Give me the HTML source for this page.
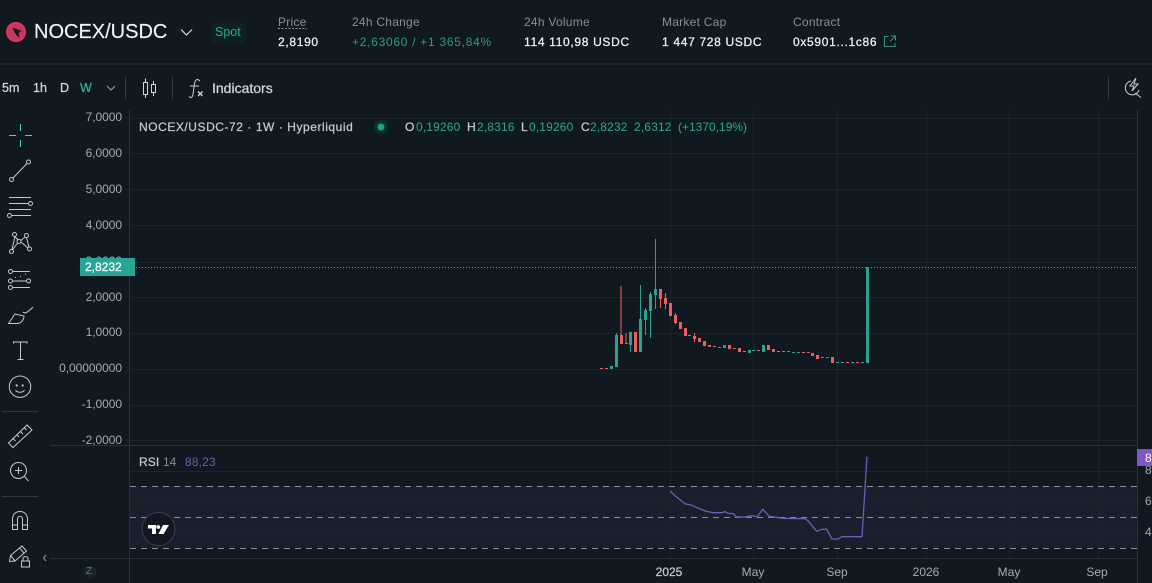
<!DOCTYPE html>
<html><head><meta charset="utf-8"><style>
html,body{margin:0;padding:0;background:#10191f;}
#p{position:relative;width:1152px;height:583px;overflow:hidden;background:#10191f;font-family:"Liberation Sans",sans-serif;filter:blur(.3px);}
.t{position:absolute;white-space:nowrap;line-height:16px;}
.l{font-size:12px;color:#878f93;letter-spacing:.25px;top:14px;}
.v{font-size:12px;color:#f2f4f4;letter-spacing:.68px;top:34px;-webkit-text-stroke:.25px #f2f4f4;}
.y{font-size:12px;color:#a4abaf;right:1030px;letter-spacing:-.05px;}
.b{font-size:12px;color:#c3cacd;top:119px;letter-spacing:.1px;-webkit-text-stroke:.25px #c3cacd;}
.g{font-size:12px;color:#2ba88f;top:119px;letter-spacing:.15px;}
.m{font-size:12.5px;color:#d4d8da;top:80px;-webkit-text-stroke:.25px #d4d8da;}
.x{font-size:12px;color:#a6adb1;top:564px;transform:translateX(-50%);}
svg{position:absolute;left:0;top:0;}
</style></head><body><div id="p">

<svg width="1152" height="583" viewBox="0 0 1152 583" fill="none">
<rect x="0" y="63" width="1152" height="2" fill="#17222a"/>
<rect x="130" y="486" width="1007" height="62" fill="#1a1f2e"/>
<g stroke="#1a252b" stroke-width="1">
<path d="M130 118.500H1137M130 153.500H1137M130 189.500H1137M130 225.500H1137M130 262.500H1137M130 297.500H1137M130 333.500H1137M130 369.500H1137M130 405.500H1137M130 440.500H1137"/>
<path d="M130 471.500H1137M130 502.500H1137M130 533.500H1137"/>
<path d="M670.500 110V558M753.500 110V558M837.500 110V558M926.500 110V558M1009.500 110V558M1098.500 110V558"/>
</g>
<g stroke="#273238" stroke-width="1">
<path d="M129.500 110V583M1137.500 110V583"/>
<path d="M50 445.500H1137M50 558.500H1137"/>
</g>
<g stroke="#8a8e96" stroke-width="1" stroke-dasharray="6 5">
<path d="M130 486.500H1137M130 517.500H1137M130 548.500H1137"/>
</g>
<path d="M130 267.500H1137" stroke="#2ab5a0" stroke-width="1" stroke-dasharray="1 2"/>
<g fill="#ef5e5e">
<rect x="600" y="368" width="3" height="1"/><rect x="605" y="368" width="3" height="1"/>
<rect x="620.500" y="286" width="1" height="58"/><rect x="620" y="335" width="3" height="9"/>
<rect x="625.500" y="333" width="1" height="11"/><rect x="625" y="343" width="3" height="1"/>
<rect x="634" y="332" width="3" height="20"/>
<rect x="659" y="289" width="3" height="10"/><rect x="660" y="299" width="1" height="9"/>
<rect x="665" y="293" width="1" height="16"/><rect x="664" y="298" width="3" height="6"/>
<rect x="669" y="303" width="3" height="13"/>
<rect x="675" y="313" width="1" height="11"/><rect x="674" y="315" width="3" height="8"/>
<rect x="679" y="322" width="3" height="7"/>
<rect x="684" y="328" width="3" height="8"/>
<rect x="688" y="335" width="3" height="1"/>
<rect x="694" y="333" width="1" height="9"/><rect x="693" y="336" width="3" height="3"/>
<rect x="698" y="338" width="3" height="4"/>
<rect x="703" y="341" width="3" height="5"/>
<rect x="708" y="345" width="3" height="2"/>
<rect x="713" y="346" width="3" height="1"/><rect x="718" y="347" width="3" height="1"/>
<rect x="728" y="345" width="3" height="4"/>
<rect x="733" y="348" width="3" height="1"/>
<rect x="738" y="348" width="3" height="4"/>
<rect x="743" y="351" width="3" height="1"/>
<rect x="757" y="350" width="3" height="1"/>
<rect x="767" y="345" width="3" height="5"/>
<rect x="772" y="349" width="3" height="3"/>
<rect x="777" y="351" width="3" height="1"/><rect x="782" y="351" width="3" height="1"/>
<rect x="802" y="352" width="3" height="1"/><rect x="807" y="352" width="3" height="1"/>
<rect x="811" y="353" width="3" height="3"/>
<rect x="816" y="355" width="3" height="4"/>
<rect x="831" y="357" width="3" height="6"/>
<rect x="846" y="362" width="3" height="1"/><rect x="856" y="362" width="3" height="1"/>
</g>
<g fill="#26a392">
<rect x="610" y="366" width="3" height="3"/>
<rect x="616" y="333" width="1" height="4"/><rect x="615" y="335" width="3" height="32"/>
<rect x="629" y="332" width="3" height="13"/><rect x="630" y="345" width="1" height="7"/>
<rect x="640" y="285" width="1" height="35"/><rect x="639" y="319" width="3" height="33"/>
<rect x="645" y="308" width="1" height="27"/><rect x="644" y="310" width="3" height="10"/>
<rect x="650" y="292" width="1" height="46"/><rect x="649" y="294" width="3" height="17"/>
<rect x="655" y="239" width="1" height="70"/><rect x="654" y="289" width="3" height="6"/>
<rect x="723" y="345" width="3" height="3"/>
<rect x="748" y="350" width="3" height="3"/>
<rect x="752" y="350" width="3" height="1"/>
<rect x="762" y="345" width="3" height="7"/>
<rect x="787" y="351" width="3" height="1"/>
<rect x="792" y="352" width="3" height="1"/><rect x="797" y="352" width="3" height="1"/>
<rect x="821" y="357" width="3" height="1"/><rect x="826" y="357" width="3" height="1"/>
<rect x="836" y="362" width="3" height="1"/><rect x="841" y="362" width="3" height="1"/>
<rect x="851" y="362" width="3" height="1"/><rect x="861" y="362" width="3" height="1"/>
<rect x="866" y="267" width="3" height="96"/>
</g>
<path d="M670 491L675 495.700L685 503.700L691.700 505.300L705 511L713.300 512.700L721.700 512.700L725 511.700L728.300 513.300L733.300 513.700L736.700 517L745 517L751.700 515.700L757.300 516.700L762.700 509.300L769.300 516.300L783.300 518.300L805 518.700L808.300 521L816.700 531.300L821.700 529.300L826.700 529.300L832 539L838.300 539L841.700 536.700L862 536.700L867 456.700" stroke="#6f5cb4" stroke-width="1.300" stroke-linejoin="round"/>

<!-- logo -->
<circle cx="16" cy="32" r="9" fill="#b93a68" stroke="#ea3060" stroke-width="2"/>
<path d="M10 26L22 38" stroke="#ea3060" stroke-width="1.400"/>
<path d="M12.500 27.500L21.500 31L18.500 33L20 37.500L16.500 35.500L15 33Z" fill="#2a1018"/>
<path d="M181 29.500L186.500 35L192 29.500" stroke="#d8dcde" stroke-width="1.200"/>
<rect x="212" y="23" width="34" height="20" rx="3" fill="#0f2125"/>
<path d="M278 28.500H307" stroke="#878f93" stroke-dasharray="2 1.500"/>
<path d="M888.500 36.500H884.500V46.500H895V43M891 36H895.500V40.500M895.500 36L890 41.500" stroke="#3f8f7d" stroke-width="1"/>
<path d="M125.500 77V99M172.500 77V99M1108.500 77V99" stroke="#333e44"/>
<path d="M107 86L111 90L115 86" stroke="#9aa2a6" stroke-width="1"/>
<g stroke="#d0d5d7" stroke-width="1"><rect x="143.500" y="82.500" width="4" height="12"/><path d="M145.500 78.500V82.500M145.500 94.500V98"/><rect x="151.500" y="84.500" width="4" height="8"/><path d="M153.500 81V84.500M153.500 92.500V96"/></g>
<path d="M200 81C197 78 195 80 194.500 84L193 94C192.500 97.500 191 98.500 189 96.500M190 86H199" stroke="#c7ccce" stroke-width="1"/>
<path d="M198 91.500L202.500 96M202.500 91.500L198 96" stroke="#d5dadc" stroke-width="1.300"/>
<g stroke="#c7ccce" stroke-width="1"><path d="M1131 81A7 7 0 1 0 1139 90"/><path d="M1135 93L1141 97.500"/><path d="M1136 78L1130 86H1134L1132 91L1138 84H1134Z"/></g>
<path d="M20.500 124V131M20.500 140V147M9 135.500H16M25 135.500H32" stroke="#4fd1bb" stroke-width="1"/>
<g stroke="#c4cacc" stroke-width="1"><circle cx="11.500" cy="179.500" r="2"/><circle cx="28.500" cy="162" r="2"/><path d="M13 178L27 163.500"/>
<path d="M9 197.500H31M9 203.500H28M12 215.500H31M9 209.500H31"/><circle cx="30.500" cy="203.500" r="2"/><circle cx="9.500" cy="215.500" r="2"/>
<circle cx="14.500" cy="234.500" r="2"/><circle cx="26.500" cy="235.500" r="2"/><circle cx="19" cy="241.500" r="2"/><circle cx="11.500" cy="251.500" r="2"/><circle cx="29.500" cy="249" r="2"/>
<path d="M15 236.500L18 240M25.500 237L20.500 240.500M21 242L28 248M17.500 243L12.500 250M15 236.500L12 249.500M26.500 237.500L29 247"/>
<circle cx="10.500" cy="271.500" r="2"/><path d="M13 271.500H30"/><circle cx="10.500" cy="281" r="2"/><circle cx="28.500" cy="281" r="2"/><path d="M13 281H26"/><circle cx="10.500" cy="287.500" r="2"/><path d="M13 287.500H30"/><path d="M15 277.500H17M20 276.500H22M25 274H27" stroke-dasharray="1 1"/>
<path d="M8.500 323.500L15 314L24 316C24 320 21 323 18 323.500Z"/><path d="M23 312C25 314 27 313 33 307"/>
<path d="M13.500 343.500V342H27V343.500M20.500 342V359M17.500 359.500H23.500"/>
<circle cx="20" cy="386.700" r="10.700"/><path d="M15.500 390C17 393 23 393 24.500 390"/><circle cx="16.700" cy="385.500" r=".6"/><circle cx="22.700" cy="385.500" r=".6"/>
<path d="M8.500 443L27 425L32 430L13 447.500Z"/><path d="M13 438.500L15.500 441M17 435L19 437M20.500 431.500L23 434M24.500 428L26.500 430"/>
<circle cx="18.500" cy="470.500" r="8"/><path d="M24.500 476.500L28.500 481M15 470.500H22M18.500 467V474"/>
<path d="M12.500 529.500V519C12.500 509 27.500 509 27.500 519V529.500H22.500V519C22.500 515.500 17.500 515.500 17.500 519V529.500ZM12.500 525H17.500M22.500 525H27.500"/>
<path d="M9.500 561.500L10.500 555.500L22 546L26.500 551L15 561ZM10.500 555.500L15 561M19.500 548L24 553"/><rect x="21.500" y="561" width="8" height="6"/><path d="M23 561V558.500C23 556 28 556 28 558.500V561"/>
</g>
<path d="M2 411.500H38M2 496.500H38" stroke="#2c373d"/>
<path d="M46 555L43.500 558L46 561" stroke="#8c9498" stroke-width="1"/>
<path d="M90 565L96 568.500V575.500L90 579L84 575.500V568.500Z" fill="#182429"/>
<circle cx="381" cy="127" r="7" fill="#103029"/><circle cx="381" cy="127" r="3.500" fill="#17a67f"/>
<circle cx="158.500" cy="529" r="16.500" fill="#141722" stroke="#3a3f4c" stroke-width="1"/>
<path d="M148 525H156V534H152V528.500H148Z" fill="#fff"/><circle cx="158.300" cy="527" r="1.900" fill="#fff"/><path d="M163 525H169L163.500 534H158.500Z" fill="#fff"/>
<rect x="1137" y="449" width="15" height="17" fill="#7e57c2"/>
</svg>

<div class="t" style="left:34px;top:20px;font-size:20px;line-height:24px;color:#f2f5f5;-webkit-text-stroke:.15px #f2f5f5;">NOCEX/USDC</div>
<div class="t" style="left:215px;top:24px;font-size:12.500px;color:#27ad8a;">Spot</div>
<div class="t l" style="left:278px;">Price</div><div class="t v" style="left:278px;">2,8190</div>
<div class="t l" style="left:352px;">24h Change</div><div class="t" style="left:352px;top:34px;font-size:12px;color:#2a9d7c;letter-spacing:.72px;">+2,63060 / +1 365,84%</div>
<div class="t l" style="left:524px;">24h Volume</div><div class="t v" style="left:524px;">114 110,98 USDC</div>
<div class="t l" style="left:662px;">Market Cap</div><div class="t v" style="left:662px;">1 447 728 USDC</div>
<div class="t l" style="left:793px;">Contract</div><div class="t v" style="left:793px;">0x5901...1c86</div>

<div class="t m" style="left:2px;">5m</div><div class="t m" style="left:33px;">1h</div><div class="t m" style="left:60px;">D</div><div class="t m" style="left:80px;color:#2ab09a;-webkit-text-stroke:.25px #2ab09a;">W</div>
<div class="t m" style="left:212px;font-size:14px;">Indicators</div>

<div class="t y" style="top:109px;">7,0000</div><div class="t y" style="top:145px;">6,0000</div><div class="t y" style="top:181px;">5,0000</div><div class="t y" style="top:217px;">4,0000</div><div class="t y" style="top:253px;">3,0000</div><div class="t y" style="top:289px;">2,0000</div><div class="t y" style="top:324px;">1,0000</div><div class="t y" style="top:360px;">0,00000000</div><div class="t y" style="top:396px;">-1,0000</div><div class="t y" style="top:432px;">-2,0000</div>
<div style="position:absolute;left:80px;top:258px;width:55px;height:18px;background:#26a795;"></div>
<div class="t" style="left:85px;top:259px;font-size:12px;color:#fff;-webkit-text-stroke:.25px #fff;">2,8232</div>

<div class="t b" style="left:139px;letter-spacing:.55px;">NOCEX/USDC-72 · 1W · Hyperliquid</div>
<div class="t b" style="left:405px;">O</div><div class="t g" style="left:416px;">0,19260</div>
<div class="t b" style="left:467px;">H</div><div class="t g" style="left:477px;">2,8316</div>
<div class="t b" style="left:521px;">L</div><div class="t g" style="left:529px;">0,19260</div>
<div class="t b" style="left:581px;">C</div><div class="t g" style="left:590px;">2,8232</div>
<div class="t g" style="left:634px;">2,6312</div><div class="t g" style="left:678px;letter-spacing:0;">(+1370,19%)</div>

<div class="t b" style="left:139px;top:454px;">RSI</div><div class="t" style="left:163px;top:454px;font-size:12px;color:#858d91;">14</div><div class="t" style="left:185px;top:454px;font-size:12px;color:#6f5cb4;letter-spacing:.15px;">88,23</div>

<div class="t" style="left:1145px;top:450px;font-size:12px;color:#fff;">8</div>
<div class="t" style="left:1145px;top:462px;font-size:12px;color:#9ca4a8;">8</div>
<div class="t" style="left:1145px;top:493px;font-size:12px;color:#9ca4a8;">6</div>
<div class="t" style="left:1145px;top:524px;font-size:12px;color:#9ca4a8;">4</div>

<div class="t" style="left:86px;top:564px;font-size:10px;color:#667075;">Z</div>
<div class="t x" style="left:669px;color:#c3cacd;-webkit-text-stroke:.25px #c3cacd;">2025</div><div class="t x" style="left:753px;">May</div><div class="t x" style="left:837px;">Sep</div><div class="t x" style="left:926px;">2026</div><div class="t x" style="left:1009px;">May</div><div class="t x" style="left:1097px;">Sep</div>
</div></body></html>
